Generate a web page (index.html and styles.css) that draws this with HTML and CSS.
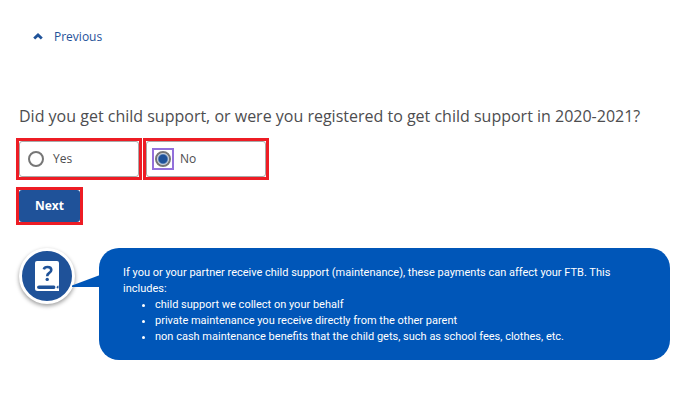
FILE: index.html
```html
<!DOCTYPE html>
<html lang="en">
<head>
    <meta charset="UTF-8">
    <meta name="viewport" content="width=device-width, initial-scale=1.0">
    <title>Child support</title>
    <link rel="stylesheet" href="styles.css">
</head>
<body>

    <a class="previous" href="#">
        <svg class="chevron" width="10" height="8" viewBox="0 0 10 8" aria-hidden="true">
            <path d="M1.2 5.6 L5 2 L8.8 5.6" fill="none" stroke="#1f5299" stroke-width="2.8"/>
        </svg>
        Previous
    </a>

    <form class="question">
        <h1 class="title" id="question-title">Did you get child support, or were you registered to get child support in 2020-2021?</h1>

        <div class="options" role="radiogroup" aria-labelledby="question-title">
            <div class="highlight">
                <label class="option">
                    <span class="radio"><input type="radio" name="support" value="yes"></span>
                    Yes
                </label>
            </div>
            <div class="highlight">
                <label class="option">
                    <span class="radio focused"><input type="radio" name="support" value="no" checked></span>
                    No
                </label>
            </div>
        </div>

        <div class="highlight">
            <button class="next" type="button">Next</button>
        </div>
    </form>

    <!-- Help message -->
    <div class="help">
        <div class="help-icon">
            <svg width="24" height="30" viewBox="0 0 24 30" aria-hidden="true">
                <path d="M2 0 H22 Q24 0 24 2 V24 Q22.6 26 24 28 V30 H2.5 Q0 30 0 27.5 V2 Q0 0 2 0 Z" fill="#fff"/>
                <path d="M4 24.5 H19 Q20.4 24.5 20.4 26.2 Q20.4 28 19 28 H4 Q2 28 2 26.2 Q2 24.5 4 24.5 Z M21.3 26.2 L23 24.6 V27.8 Z" fill="#1f5299"/>
                <path d="M8.8 8.3 Q9.5 6 12.5 6 Q16.3 6 16.3 9 Q16.3 10.8 14 12.2 Q12.2 13.4 12.2 15.3" fill="none" stroke="#1f5299" stroke-width="2.6"/>
                <circle cx="12.2" cy="18.4" r="1.7" fill="#1f5299"/>
            </svg>
        </div>
        <div class="bubble">
            <svg class="tail" width="28" height="12" viewBox="0 0 28 12" aria-hidden="true">
                <path d="M0 10.5 L28 0 V12 H0 Z" fill="#0056b8"/>
            </svg>
            <p>If you or your partner receive child support (maintenance), these payments can affect your FTB. This includes:</p>
            <ul>
                <li>child support we collect on your behalf</li>
                <li>private maintenance you receive directly from the other parent</li>
                <li>non cash maintenance benefits that the child gets, such as school fees, clothes, etc.</li>
            </ul>
        </div>
    </div>

</body>
</html>
```

FILE: styles.css
```css
* {
    box-sizing: border-box;
}

body {
    margin: 0;
    padding: 27px 20px 24px 16px;
    background-color: #fff;
    color: #4d4d4f;
    font-family: "Open Sans", "Noto Sans", sans-serif;
    font-size: 12px;
    line-height: 20px;
}

.previous {
    display: flex;
    align-items: center;
    gap: 11px;
    width: fit-content;
    padding-left: 17px;
    color: #1f5299;
    font-weight: 500;
    text-decoration: none;
}

.title {
    margin: 57px 0 10px;
    padding-left: 3px;
    font-size: 16px;
    font-weight: 400;
    line-height: 24px;
}

.options {
    display: flex;
    gap: 1px;
    margin-bottom: 7px;
}

/* red frame around the controls */
.highlight {
    width: fit-content;
    border: 3px solid #ed1c24;
}

.option {
    display: flex;
    align-items: center;
    gap: 6px;
    width: 120px;
    height: 36px;
    padding-left: 5px;
    border: 1px solid #a9a9a9;
    border-radius: 3px;
}

.radio {
    display: flex;
    border: 2px solid transparent;
    padding: 1px;
}

.radio.focused {
    border-color: #9370db;
}

.option input {
    appearance: none;
    width: 16px;
    height: 16px;
    margin: 0;
    border: 2px solid #767676;
    border-radius: 50%;
    background-color: #fff;
    outline: none;
}

.option input:checked {
    background: radial-gradient(circle, #1f5299 4px, #fff 6px);
}

.next {
    display: block;
    padding: 6px 16px;
    border: none;
    border-radius: 3px;
    background-color: #1f5299;
    color: #fff;
    font-family: inherit;
    font-size: 12px;
    font-weight: 700;
    line-height: 20px;
    cursor: pointer;
}

.help {
    display: flex;
    align-items: flex-start;
    gap: 24px;
    margin-top: 23px;
    padding-left: 3px;
}

.help-icon {
    display: flex;
    flex: none;
    align-items: center;
    justify-content: center;
    width: 56px;
    height: 56px;
    border: 3px solid #fff;
    border-radius: 50%;
    background-color: #1f5299;
    box-shadow: 0 2px 4px rgba(0, 0, 0, 0.4);
}

.bubble {
    position: relative;
    flex: 1;
    padding: 17px 24px 15px;
    border-radius: 20px;
    background-color: #0056b8;
    color: #fff;
    font-family: Roboto, "Open Sans", sans-serif;
    font-size: 11px;
    line-height: 16px;
}

.tail {
    position: absolute;
    top: 27px;
    left: -27px;
}

.bubble p {
    margin: 0;
}

.bubble ul {
    margin: 0;
    padding-left: 32px;
}
```
